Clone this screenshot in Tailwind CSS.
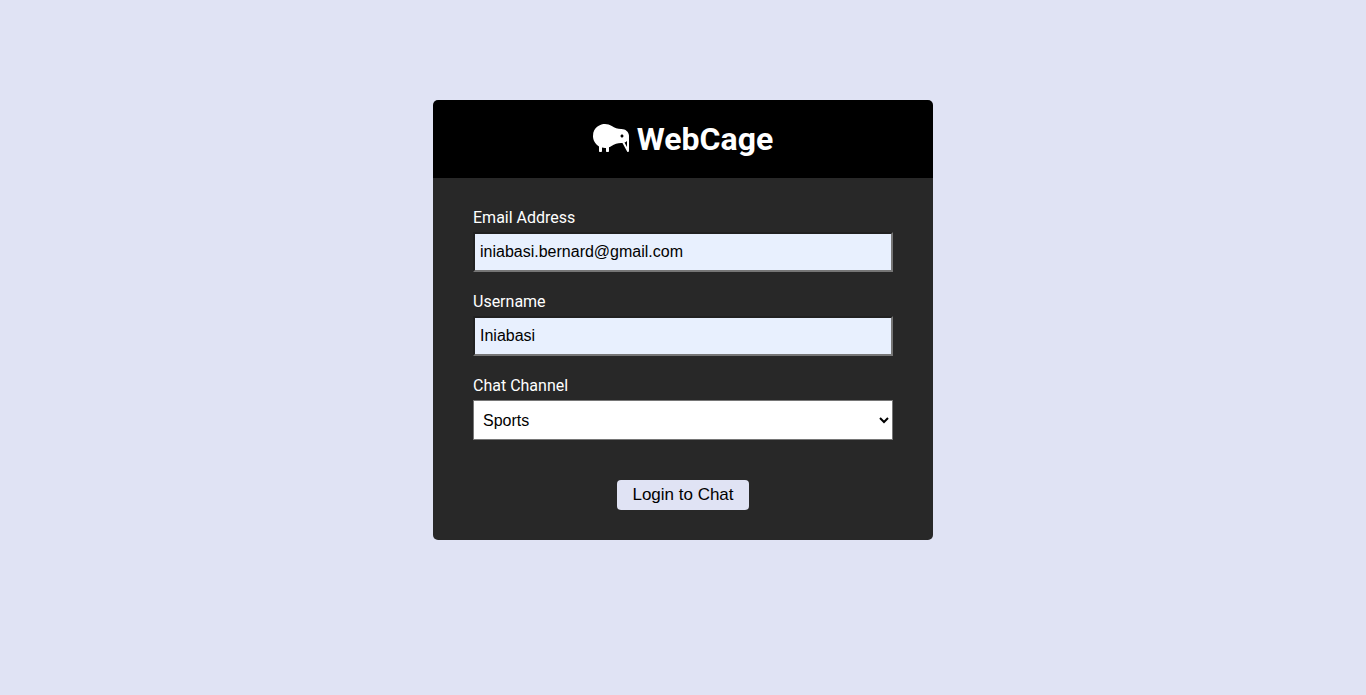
<!DOCTYPE html>
<html lang="en">
<head>
  <meta charset="UTF-8" />
  <meta name="viewport" content="width=device-width, initial-scale=1.0" />
  <title>WebCage</title>
  <script src="https://cdn.jsdelivr.net/npm/@tailwindcss/browser@4"></script>
</head>
<body class="bg-[#e0e3f4] min-h-screen font-['Roboto',sans-serif] text-white">
  <div class="w-[500px] mx-auto pt-[100px]">
    <header class="bg-black h-[78px] rounded-t-[5px] flex items-center justify-center gap-2">
      <svg class="w-9 h-8 mb-[2px] fill-white" viewBox="0 0 576 512" xmlns="http://www.w3.org/2000/svg">
        <path d="M575.81 217.98C572.64 157.41 518.28 112 457.63 112h-9.37c-52.82 0-104.25-16.25-147.74-46.24-41.99-28.96-96.04-41.62-153.21-28.7C129.3 41.12-.08 78.24 0 224c.04 70.95 38.68 132.8 95.99 166.01V464c0 8.84 7.16 16 16 16h16c8.84 0 16-7.16 16-16v-54.26c15.36 3.96 31.4 6.26 48 6.26 5.44 0 10.68-.73 16-1.18V464c0 8.84 7.16 16 16 16h16c8.84 0 16-7.16 16-16v-59.43c14.24-5.06 27.88-11.39 40.34-19.51C342.07 355.25 393.86 336 448.46 336c25.48 0 16.01-.31 23.05-.78l74.41 136.44c2.86 5.23 8.3 8.34 14.05 8.34 1.31 0 2.64-.16 3.95-.5 7.09-1.8 12.05-8.19 12.05-15.5 0 0 .14-240.24-.16-246.02zM463.97 248c-13.25 0-24-10.75-24-24 0-13.26 10.75-24 24-24s24 10.74 24 24c0 13.25-10.75 24-24 24zm80 153.25l-39.86-73.08c15.12-5.83 28.73-14.6 39.86-25.98v99.06z"/>
      </svg>
      <h1 class="text-[32px] leading-[51px] font-bold">WebCage</h1>
    </header>
    <main class="bg-[#282828] rounded-b-[5px] px-10 py-[30px]">
      <form>
        <div class="mb-5">
          <label for="email" class="block text-base leading-[19px] mb-[5px]">Email Address</label>
          <input id="email" type="text" value="iniabasi.bernard@gmail.com" class="block w-full h-10 px-[5px] bg-[#e8f0fe] text-black text-base font-['Liberation_Sans',sans-serif] border-2 [border-style:inset] border-[#767676]" />
        </div>
        <div class="mb-5">
          <label for="username" class="block text-base leading-[19px] mb-[5px]">Username</label>
          <input id="username" type="text" value="Iniabasi" class="block w-full h-10 px-[5px] bg-[#e8f0fe] text-black text-base font-['Liberation_Sans',sans-serif] border-2 [border-style:inset] border-[#767676]" />
        </div>
        <div class="mb-5">
          <label for="room" class="block text-base leading-[19px] mb-[5px]">Chat Channel</label>
          <select id="room" class="block w-full h-10 px-[5px] bg-white text-black text-base font-['Liberation_Sans',sans-serif] border border-[#767676] appearance-auto">
            <option>Sports</option>
          </select>
        </div>
        <div class="flex justify-center mt-10">
          <button type="button" class="h-[30px] bg-[#e0e3f4] text-black text-[17px] leading-[18px] font-['Liberation_Sans',sans-serif] px-[15px] rounded-[4px]">Login to Chat</button>
        </div>
      </form>
    </main>
  </div>
</body>
</html>
